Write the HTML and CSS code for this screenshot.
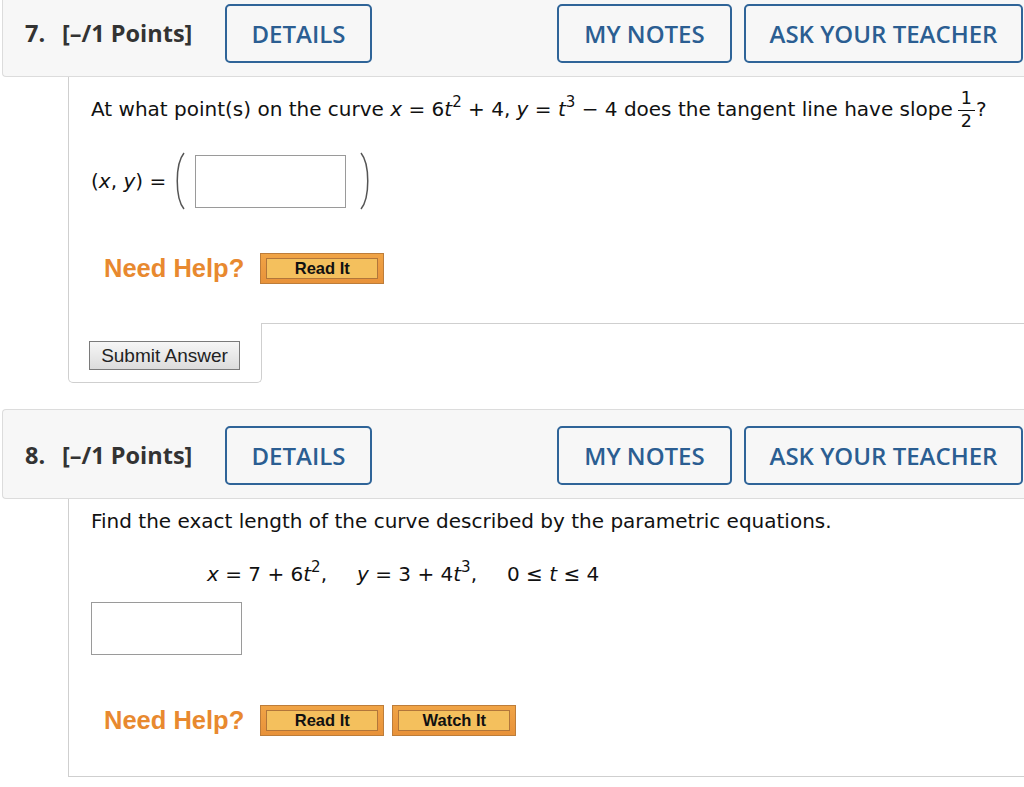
FILE: index.html
```html
<!DOCTYPE html>
<html>
<head>
<meta charset="utf-8">
<link rel="stylesheet" href="styles.css">
</head>
<body>
<div class="page">
  <section class="question">
    <div class="qhead">
      <div class="points"><span class="qnum">7.</span>[–/1 Points]</div>
      <button class="hbtn w-details">DETAILS</button>
      <button class="hbtn w-notes push">MY NOTES</button>
      <button class="hbtn w-ask">ASK YOUR TEACHER</button>
    </div>
    <div class="qbody body1">
      <div class="line1">
        <span>At what point(s) on the curve <i>x</i> = 6<i>t</i><sup>2</sup> + 4, <i>y</i> = <i>t</i><sup>3</sup> − 4 does the tangent line have slope</span>
        <span class="frac"><span class="num">1</span><span class="den">2</span></span><span>?</span>
      </div>
      <div class="line2">
        <span>(<i>x</i>, <i>y</i>) =</span>
        <svg class="paren" width="14" height="58" viewBox="0 0 14 58"><path d="M11 1 C2 12 2 46 11 57" fill="none" stroke="#555" stroke-width="1.5"/></svg>
        <span class="answer a1"></span>
        <svg class="paren" width="14" height="58" viewBox="0 0 14 58"><path d="M3 1 C12 12 12 46 3 57" fill="none" stroke="#555" stroke-width="1.5"/></svg>
      </div>
      <div class="help help1">
        <span class="need">Need Help?</span>
        <span class="obtn"><span class="obtn-in">Read It</span></span>
      </div>
    </div>
    <div class="submit-tab">
      <button class="submit">Submit Answer</button>
    </div>
  </section>

  <section class="question q2">
    <div class="qhead">
      <div class="points"><span class="qnum">8.</span>[–/1 Points]</div>
      <button class="hbtn w-details">DETAILS</button>
      <button class="hbtn w-notes push">MY NOTES</button>
      <button class="hbtn w-ask">ASK YOUR TEACHER</button>
    </div>
    <div class="qbody body2">
      <div class="p2">Find the exact length of the curve described by the parametric equations.</div>
      <div class="eq"><i>x</i> = 7 + 6<i>t</i><sup>2</sup>,<span class="sp"></span><i>y</i> = 3 + 4<i>t</i><sup>3</sup>,<span class="sp"></span>0 ≤ <i>t</i> ≤ 4</div>
      <span class="answer a2"></span>
      <div class="help help2">
        <span class="need">Need Help?</span>
        <span class="obtn"><span class="obtn-in">Read It</span></span>
        <span class="obtn"><span class="obtn-in">Watch It</span></span>
      </div>
    </div>
  </section>
</div>
</body>
</html>
```

FILE: styles.css
```css
html, body {
  margin: 0;
  padding: 0;
  background: #fff;
}
body {
  font-family: "DejaVu Sans", Verdana, sans-serif;
  font-size: 20px;
  color: #111;
  overflow: hidden;
}
.page {
  margin-top: -13px;
  padding-left: 2px;
}
.question {
  margin-bottom: 26px;
}
.qhead {
  box-sizing: border-box;
  height: 90px;
  background: #f7f7f7;
  border: 1px solid #dcdcdc;
  border-right: none;
  border-radius: 4px 0 0 4px;
  display: flex;
  align-items: center;
  padding: 2px 1px 0 22px;
}
.points {
  font-family: "Open Sans", sans-serif;
  font-weight: 700;
  font-size: 23.5px;
  color: #333;
  width: 200px;
  white-space: nowrap;
}
.qnum {
  display: inline-block;
  width: 37px;
}
.hbtn {
  box-sizing: border-box;
  height: 59px;
  background: transparent;
  border: 2px solid #2f6498;
  border-radius: 5px;
  font-family: "Open Sans", sans-serif;
  font-weight: 600;
  font-size: 24px;
  color: #2b5e92;
  padding: 0;
  margin: 0;
  white-space: nowrap;
}
.w-details { width: 147px; }
.w-notes { width: 175px; }
.w-ask { width: 279px; margin-left: 12px; }
.push { margin-left: auto; }

.qbody {
  margin-left: 66px;
  border-left: 1px solid #cfcfcf;
  border-bottom: 1px solid #cfcfcf;
  padding-left: 22px;
}
.body1 {
  padding-top: 12px;
  padding-bottom: 37px;
}
i {
  font-style: italic;
}
sup {
  font-size: 0.75em;
  line-height: 0;
  vertical-align: 0.6em;
}
.line1 {
  height: 40px;
  display: flex;
  align-items: center;
  white-space: nowrap;
}
.frac {
  display: inline-flex;
  flex-direction: column;
  align-items: center;
  font-size: 17.5px;
  line-height: 1;
  margin: 0 1px 0 5px;
  position: relative;
  top: 1px;
}
.frac .num {
  padding: 0 3px 2px;
  border-bottom: 1.4px solid #111;
}
.frac .den {
  padding-top: 2px;
}
.line2 {
  margin-top: 21px;
  height: 62px;
  display: flex;
  align-items: center;
}
.paren {
  display: block;
  margin: 0 2px;
}
.line2 .paren:first-of-type {
  margin-left: 7px;
  margin-right: 8px;
}
.line2 .paren:last-of-type {
  margin-left: 12px;
}
.answer {
  display: block;
  box-sizing: border-box;
  width: 151px;
  height: 53px;
  border: 1px solid #9a9a9a;
  background: #fff;
}
.help {
  height: 36px;
  display: flex;
  align-items: center;
  padding-left: 13px;
}
.help1 {
  margin-top: 38px;
}
.need {
  font-family: "Liberation Sans", Arial, sans-serif;
  font-weight: 700;
  font-size: 25.5px;
  color: #e8892f;
  margin-right: 16px;
}
.obtn {
  box-sizing: border-box;
  width: 124px;
  height: 31px;
  display: flex;
  padding: 4px 5px;
  background: linear-gradient(#f0a446, #e8923a);
  border: 1px solid #bd7d3a;
  margin-right: 8px;
}
.obtn-in {
  flex: 1;
  display: flex;
  align-items: center;
  justify-content: center;
  background: #f4c05d;
  border: 1px solid #b2763a;
  font-family: "Liberation Sans", Arial, sans-serif;
  font-weight: 700;
  font-size: 16.5px;
  color: #111;
}
.submit-tab {
  box-sizing: border-box;
  margin-left: 66px;
  margin-top: -1px;
  width: 194px;
  background: #fff;
  border: 1px solid #cfcfcf;
  border-top: none;
  border-radius: 0 0 5px 5px;
  padding: 18px 0 12px 20px;
  position: relative;
}
.submit-tab::before {
  content: "";
  position: absolute;
  top: -1px;
  left: -1px;
  width: 1px;
  height: 1px;
  background: #cfcfcf;
}
.submit {
  box-sizing: border-box;
  display: block;
  width: 151px;
  height: 29px;
  padding: 0;
  border: 1px solid #7a7a7a;
  background: linear-gradient(#f6f6f6, #dcdcdc);
  font-family: "Liberation Sans", Arial, sans-serif;
  font-size: 19px;
  color: #222;
}
.body2 {
  padding-top: 10px;
  padding-bottom: 38px;
}
.p2 {
  height: 24px;
  line-height: 24px;
}
.eq {
  margin-top: 29px;
  height: 24px;
  line-height: 24px;
  padding-left: 116px;
  white-space: nowrap;
}
.sp {
  display: inline-block;
  width: 30px;
}
.a2 {
  margin-top: 16px;
}
.help2 {
  margin-top: 47px;
}
```
